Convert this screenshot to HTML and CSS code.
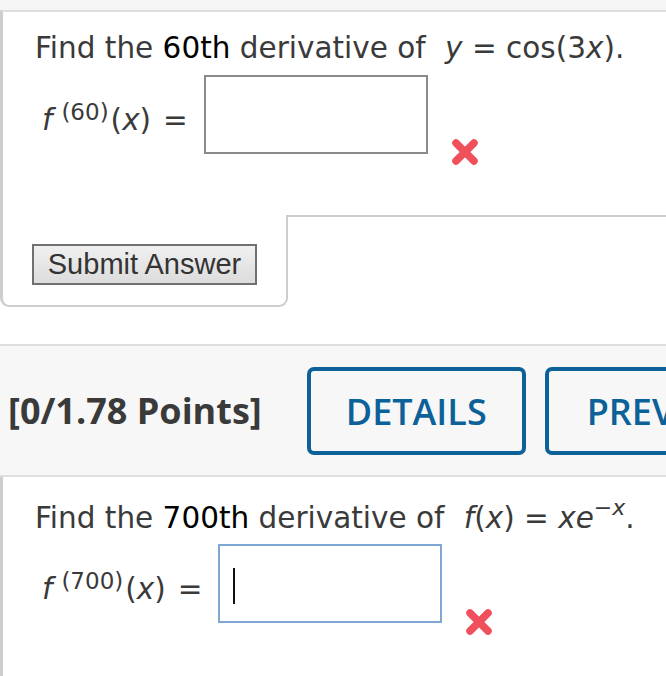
FILE: index.html
```html
<!DOCTYPE html>
<html>
<head>
<meta charset="utf-8">
<link rel="stylesheet" href="styles.css">
</head>
<body>
<div class="topband"></div>
<div class="q1">
  <div class="q1-upper">
    <p class="prompt">Find the <span class="num">60th</span> derivative of <span class="math"><i>y</i> = cos(3<i>x</i>).</span></p>
    <div class="answer-row">
      <span class="lhs"><i class="fn">f</i><sup>(60)</sup>(<i>x</i>)<span class="eq">=</span></span>
      <span class="answer-box"></span>
      <svg class="wrong" viewBox="0 0 32 32" width="32" height="32"><path d="M7 7 L25 25 M25 7 L7 25" stroke="#f0505c" stroke-width="7.5" stroke-linecap="round"/></svg>
    </div>
  </div>
  <div class="q1-lower">
    <button class="submit">Submit Answer</button>
  </div>
</div>
<div class="band">
  <span class="points">[0/1.78 Points]</span>
  <span class="btn">DETAILS</span>
  <span class="btn">PREVIOUS ANSWERS</span>
</div>
<div class="q2">
  <p class="prompt">Find the <span class="num">700th</span> derivative of <span class="math"><i>f</i>(<i>x</i>) = <i>xe</i><sup class="exp">&minus;<i>x</i></sup>.</span></p>
  <div class="answer-row">
    <span class="lhs"><i class="fn">f</i><sup>(700)</sup>(<i>x</i>)<span class="eq">=</span></span>
    <span class="answer-box active"><span class="caret"></span></span>
    <svg class="wrong" viewBox="0 0 32 32" width="32" height="32"><path d="M7 7 L25 25 M25 7 L7 25" stroke="#f0505c" stroke-width="7.5" stroke-linecap="round"/></svg>
  </div>
</div>
</body>
</html>
```
FILE: styles.css
```css
html, body {
  margin: 0;
  padding: 0;
  background: #fff;
  overflow: hidden;
}
body {
  width: 666px;
  height: 676px;
  font-family: "DejaVu Sans", Verdana, sans-serif;
  color: #3a3a3a;
}
.topband {
  height: 10px;
  background: #f5f5f5;
}
.q1-upper {
  border-top: 2px solid #dedede;
  border-left: 3px solid #cdcdcd;
  border-bottom: 2px solid #cdcdcd;
  padding-left: 32px;
  box-sizing: border-box;
  height: 207px;
}
.prompt {
  margin: 0;
  padding-top: 18px;
  font-size: 29.5px;
  line-height: 36px;
  white-space: nowrap;
}
.num { color: #000; }
.math { margin-left: 10px; }
.math i, .lhs i { font-style: italic; }
.answer-row {
  display: flex;
  align-items: flex-start;
  margin-top: 9px;
}
.lhs {
  font-size: 29.5px;
  margin-left: 7px;
  margin-top: 24px;
  white-space: nowrap;
}
.lhs sup {
  font-size: 23px;
  vertical-align: 10px;
  margin-left: 9px;
  margin-right: 2px;
}
.eq { margin-left: 12px; }
.answer-box {
  display: block;
  width: 224px;
  height: 79px;
  box-sizing: border-box;
  border: 2px solid #8a8a8a;
  margin-left: 16px;
  background: #fff;
}
.answer-box.active {
  border-color: #7ea7d3;
  position: relative;
}
.caret {
  position: absolute;
  left: 13px;
  top: 22px;
  width: 2px;
  height: 36px;
  background: #111;
}
.wrong {
  margin-left: 21px;
  margin-top: 61px;
}
.q1-lower {
  width: 288px;
  box-sizing: border-box;
  margin-top: -2px;
  background: #fff;
  border-left: 3px solid #cdcdcd;
  border-right: 2px solid #cdcdcd;
  border-bottom: 2px solid #cdcdcd;
  border-radius: 0 0 9px 9px;
  height: 92px;
  padding-top: 29px;
  padding-left: 29px;
}
.submit {
  display: block;
  width: 225px;
  height: 41px;
  border: 2px solid #707070;
  background: linear-gradient(#f0f0f0, #dcdcdc);
  font-family: "Liberation Sans", Arial, sans-serif;
  font-size: 29px;
  color: #333;
  padding: 0;
  margin: 0;
}
.band {
  margin-top: 37px;
  border-top: 2px solid #dedede;
  border-bottom: 2px solid #dedede;
  background: #f7f7f7;
  height: 133px;
  box-sizing: border-box;
  padding-top: 21px;
  padding-left: 8px;
  display: flex;
  align-items: flex-start;
  white-space: nowrap;
}
.points {
  font-family: "Open Sans", sans-serif;
  font-weight: 700;
  font-size: 36px;
  line-height: 88px;
  color: #3a3a3a;
  margin-right: 45px;
}
.btn {
  flex: none;
  width: 219px;
  height: 88px;
  box-sizing: border-box;
  border: 4px solid #0c6199;
  border-radius: 7px;
  font-family: "Open Sans", sans-serif;
  font-weight: 600;
  font-size: 36px;
  color: #0c6199;
  display: flex;
  align-items: center;
  justify-content: center;
  margin-right: 19px;
  overflow: hidden;
}
.btn + .btn {
  justify-content: flex-start;
  padding-left: 38px;
  width: 300px;
}
.q2 {
  border-left: 3px solid #cdcdcd;
  padding-left: 32px;
  height: 200px;
}
.q2 .prompt { padding-top: 13px; }
.exp {
  font-size: 22px;
  vertical-align: 13px;
}
.q2 .answer-row { margin-top: 8px; }
.q2 .wrong { margin-top: 62px; }
```
